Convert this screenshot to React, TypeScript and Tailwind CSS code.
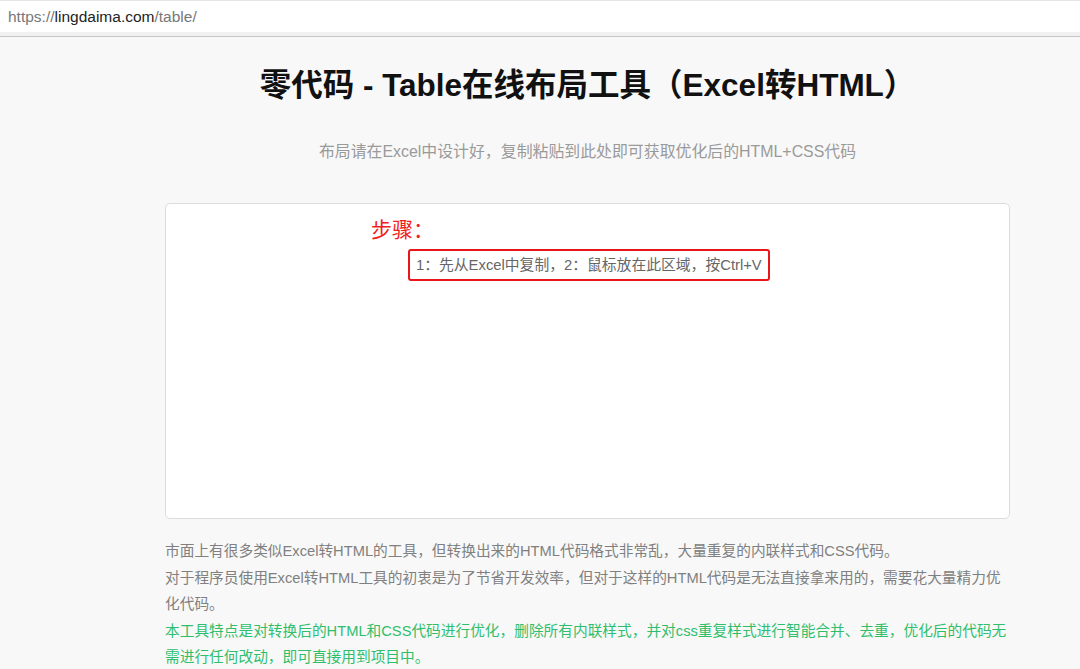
import React from "react";

const font = {
  fontFamily:
    '"Liberation Sans", Arial, "Noto Sans CJK SC", "Noto Sans", sans-serif',
};

export default function App() {
  return (
    <div
      className="flex min-h-[669px] w-[1080px] flex-col bg-[#f8f8f8]"
      style={font}
    >
      {/* address bar */}
      <div className="flex h-[32px] items-center border-t border-[#e6e6e6] bg-white px-[8px] text-[15.5px]">
        <span className="text-[#777]">https://</span>
        <span className="text-[#222]">lingdaima.com</span>
        <span className="text-[#777]">/table/</span>
      </div>
      <div className="h-[5px] border-b border-[#c8c8c8] bg-[#f1f1f1]" />

      <div className="ml-[165px] flex w-[845px] flex-col">
        <h1 className="mt-[24px] text-center text-[31.5px] leading-[48px] font-bold text-[#111]">
          零代码 - Table在线布局工具（Excel转HTML）
        </h1>
        <p className="mt-[31px] text-center text-[15.9px] leading-[24px] text-[#9a9a9a]">
          布局请在Excel中设计好，复制粘贴到此处即可获取优化后的HTML+CSS代码
        </p>

        <div className="mt-[39px] h-[316px] rounded-[5px] border border-[#dcdcdc] bg-white pt-[12px] pl-[205px]">
          <div className="text-[21px] leading-[28px] text-[#f21d1d]">步骤：</div>
          <div className="mt-[5px] ml-[37px] inline-flex h-[32px] items-center rounded-[3px] border-[2.5px] border-[#e8161b] px-[6px] text-[14.8px] text-[#666]">
            1：先从Excel中复制，2：鼠标放在此区域，按Ctrl+V
          </div>
        </div>

        <div className="mt-[19px] text-[14.7px] leading-[26.5px]">
          <p className="text-[#808080]">
            市面上有很多类似Excel转HTML的工具，但转换出来的HTML代码格式非常乱，大量重复的内联样式和CSS代码。
          </p>
          <p className="text-[#808080]">
            对于程序员使用Excel转HTML工具的初衷是为了节省开发效率，但对于这样的HTML代码是无法直接拿来用的，需要花大量精力优化代码。
          </p>
          <p className="text-[#2fbf6c]">
            本工具特点是对转换后的HTML和CSS代码进行优化，删除所有内联样式，并对css重复样式进行智能合并、去重，优化后的代码无需进行任何改动，即可直接用到项目中。
          </p>
        </div>
      </div>
    </div>
  );
}
